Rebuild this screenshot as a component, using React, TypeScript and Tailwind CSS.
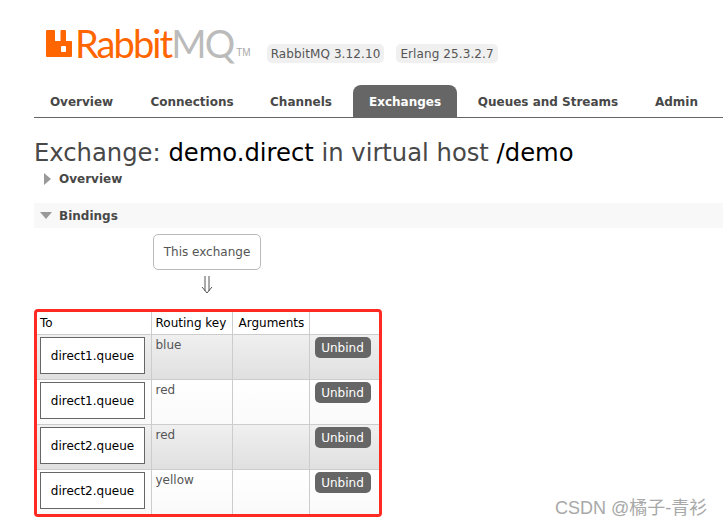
const rows = [
  { q: "direct1.queue", k: "blue", alt: true },
  { q: "direct1.queue", k: "red", alt: false },
  { q: "direct2.queue", k: "red", alt: true },
  { q: "direct2.queue", k: "yellow", alt: false },
];

function Tab({ label, active, w }: { label: string; active?: boolean; w: string }) {
  return (
    <div
      className={`${w} h-[32px] pt-[1px] flex items-center justify-center text-[12px] font-bold rounded-t-[8px] whitespace-nowrap ${
        active ? "bg-[#666666] text-white" : "text-[#484848]"
      }`}
    >
      {label}
    </div>
  );
}

export default function App() {
  return (
    <div className="relative w-[723px] h-[527px] overflow-hidden bg-white text-[#484848] font-['DejaVu_Sans','Liberation_Sans',sans-serif]">
      <div className="h-[85px] pl-[46px] pt-[30px] flex items-start">
        <svg width="26" height="27" viewBox="0 0 26 27" className="shrink-0">
          <path
            fill="#ff6600"
            fillRule="evenodd"
            d="M1 0h7a1 1 0 0 1 1 1v10h5.500V1a1 1 0 0 1 1-1h3.500a1 1 0 0 1 1 1v10h5a1 1 0 0 1 1 1v14a1 1 0 0 1-1 1H1a1 1 0 0 1-1-1V1a1 1 0 0 1 1-1zM15 17v4a1 1 0 0 0 1 1h3a1 1 0 0 0 1-1v-4a1 1 0 0 0-1-1h-3a1 1 0 0 0-1 1z"
          />
        </svg>
        <div className="ml-[3px] -mt-[10px] text-[38px] leading-[46px] font-normal tracking-[-1.9px] font-['Lato','Liberation_Sans',sans-serif] whitespace-nowrap">
          <span className="text-[#ff6600]">Rabbit</span>
          <span className="text-[#bbbbbb]">MQ</span>
        </div>
        <div className="ml-[3px] mt-[18px] text-[10px] leading-[10px] text-[#aaaaaa] font-['Liberation_Sans',sans-serif]">TM</div>
        <div className="ml-[16px] mt-[14px] px-[4px] h-[19px] flex items-center rounded-[5px] bg-[#f0f0f0] text-[12px] tracking-[0.1px] text-[#555555] whitespace-nowrap">RabbitMQ 3.12.10</div>
        <div className="ml-[12px] mt-[14px] px-[4px] h-[19px] flex items-center rounded-[5px] bg-[#f0f0f0] text-[12px] tracking-[0.1px] text-[#555555] whitespace-nowrap">Erlang 25.3.2.7</div>
      </div>

      <div className="ml-[34px] h-[33px] border-b border-[#666666] flex items-start gap-[5px]">
        <Tab label="Overview" w="w-[96px] pr-[1px]" />
        <Tab label="Connections" w="w-[114px]" />
        <Tab label="Channels" w="w-[94px]" />
        <Tab label="Exchanges" active w="w-[104px]" />
        <Tab label="Queues and Streams" w="w-[172px]" />
        <Tab label="Admin" w="w-[75px]" />
      </div>

      <div className="ml-[34px]">
        <h1 className="mt-[18px] h-[34px] text-[24.25px] leading-[34px] font-normal text-[#484848] whitespace-nowrap">
          Exchange: <span className="text-black">demo.direct</span> in virtual host <span className="text-black">/demo</span>
        </h1>
        <div className="h-[18px] flex items-center pl-[10px] text-[12px] font-bold">
          <svg width="7" height="12" viewBox="0 0 7 12" className="mr-[8px]"><path d="M0 0l7 6-7 6z" fill="#999999" /></svg>
          Overview
        </div>
        <div className="mt-[15px] h-[25px] bg-[#f8f8f8] flex items-center pl-[6px] text-[12px] font-bold">
          <svg width="12" height="7" viewBox="0 0 12 7" className="mr-[7px]"><path d="M0 0h12l-6 7z" fill="#999999" /></svg>
          Bindings
        </div>

        <div className="ml-[119px] mt-[6px] w-[108px] h-[36px] border border-[#bbbbbb] rounded-[5px] flex items-center justify-center text-[12px] text-[#555555]">This exchange</div>
        <div className="ml-[119px] w-[108px] h-[39px] flex justify-center items-start pt-[6px]">
          <svg width="12" height="18" viewBox="0 0 12 18" fill="none">
            <path d="M4 0v15" stroke="#555555" strokeWidth="1" />
            <path d="M8 0v15" stroke="#555555" strokeWidth="1" />
            <path d="M1 11l5 6 5-6" stroke="#555555" strokeWidth="1" />
          </svg>
        </div>

        <div className="w-[348px] h-[208px] border-[3px] border-[#ff2a22] rounded-[4px] overflow-hidden">
          <table className="border-collapse table-fixed w-[342px] text-[12px]">
            <thead>
              <tr className="h-[22px] text-black">
                <th className="w-[114px] font-normal text-left pl-[3px] p-0 border-r border-b border-[#cccccc]">To</th>
                <th className="w-[81px] font-normal text-left pl-[4px] p-0 border-r border-b border-[#cccccc] whitespace-nowrap">Routing key</th>
                <th className="w-[77px] font-normal text-left pl-[6px] p-0 border-r border-b border-[#cccccc]">Arguments</th>
                <th className="font-normal border-b border-[#cccccc]"></th>
              </tr>
            </thead>
            <tbody>
              {rows.map((r, i) => (
                <tr
                  key={i}
                  className={`h-[45px] ${r.alt ? "bg-gradient-to-b from-[#f0f0f0] to-[#e0e0e0]" : "bg-gradient-to-b from-white to-[#fafafa]"}`}
                >
                  <td className="p-0 border-r border-b border-[#cccccc] align-top">
                    <div className="ml-[3px] mt-[2px] w-[105px] h-[37px] pt-[2px] border border-[#666666] bg-white text-black flex items-center justify-center">{r.q}</div>
                  </td>
                  <td className="pl-[4px] pt-[1px] border-r border-b border-[#cccccc] align-top text-[#555555]">{r.k}</td>
                  <td className="border-r border-b border-[#cccccc]"></td>
                  <td className="pl-[5px] pt-[2px] border-b border-[#cccccc] align-top">
                    <div className="w-[56px] h-[21px] pt-[1px] rounded-[5px] bg-[#666666] text-white flex items-center justify-center">Unbind</div>
                  </td>
                </tr>
              ))}
            </tbody>
          </table>
        </div>
      </div>

      <div className="absolute left-[555px] top-[497px] text-[18px] leading-[22px] text-[#a8a8a8] whitespace-nowrap font-['Liberation_Sans','Noto_Sans_CJK_SC',sans-serif]">CSDN @橘子-青衫</div>
    </div>
  );
}
